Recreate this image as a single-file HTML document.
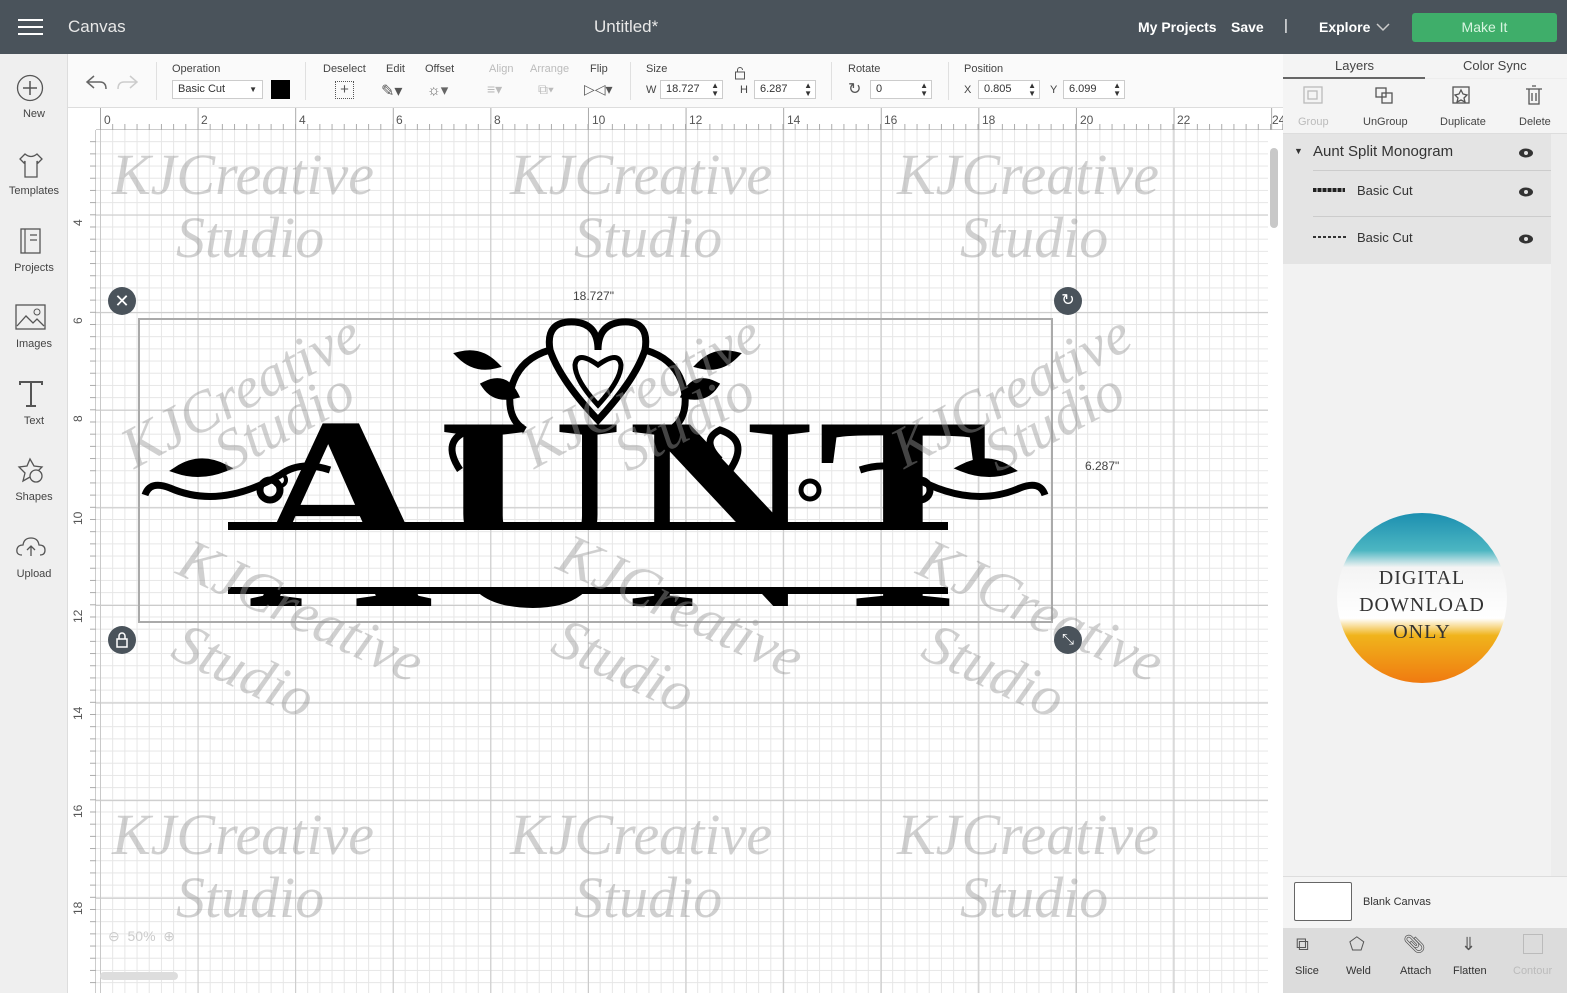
<!DOCTYPE html>
<html><head><meta charset="utf-8"><style>
*{box-sizing:border-box;margin:0;padding:0}
body{width:1588px;height:993px;overflow:hidden;background:#fff;font-family:"Liberation Sans",sans-serif;position:relative;color:#333}
.abs{position:absolute}
#top{left:0;top:0;width:1567px;height:54px;background:#4a535b;color:#fff}
#side{left:0;top:54px;width:68px;height:939px;background:#efefef;border-right:1px solid #ddd}
.si{position:absolute;left:0;width:68px;text-align:center;font-size:11px;color:#444}
#tool{left:68px;top:54px;width:1215px;height:54px;background:#fafafa;border-bottom:1px solid #ddd}
.lab{position:absolute;font-size:11px;color:#444}
.dim{color:#bbb}
.inp{position:absolute;height:19px;border:1px solid #ccc;background:#fff;font-size:11px;padding:2px 5px}
#canvas{left:96px;top:130px;width:1172px;height:863px;background-color:#fff;
background-image:
linear-gradient(to right,#c9c9c9 1px,transparent 1px),
linear-gradient(to bottom,#c9c9c9 1px,transparent 1px),
linear-gradient(to right,#e6e6e6 1px,transparent 1px),
linear-gradient(to bottom,#e6e6e6 1px,transparent 1px);
background-size:97.6px 97.6px,97.6px 97.6px,12.2px 12.2px,12.2px 12.2px;
background-position:4px 0,0 -13px,4px 0,0 -1px}
#hr{left:96px;top:108px;width:1187px;height:22px;background:#fff;border-bottom:1px solid #ccc}
#vr{left:68px;top:130px;width:28px;height:863px;background:#fff;border-right:1px solid #ccc}
#panel{left:1283px;top:54px;width:284px;height:939px;background:#ededed}
.wm{position:absolute;font-family:"Liberation Serif",serif;font-style:italic;color:rgba(150,150,150,.45);font-size:58px;line-height:62px;white-space:nowrap}
.big{font-family:"Liberation Serif",serif;font-weight:bold;color:#000;font-size:210px;line-height:1;white-space:nowrap;position:absolute}
</style></head><body>

<div id="top" class="abs">
 <div class="abs" style="left:18px;top:19px;width:25px;height:2px;background:#fff;box-shadow:0 7px 0 #fff,0 14px 0 #fff"></div>
 <div class="abs" style="left:68px;top:17px;font-size:17px;color:#e8e8e8">Canvas</div>
 <div class="abs" style="left:594px;top:17px;font-size:17px;color:#e8e8e8">Untitled*</div>
 <div class="abs" style="left:1138px;top:19px;font-size:14px;font-weight:bold">My Projects</div>
 <div class="abs" style="left:1231px;top:19px;font-size:14px;font-weight:bold">Save</div>
 <div class="abs" style="left:1284px;top:17px;font-size:15px">|</div>
 <div class="abs" style="left:1319px;top:19px;font-size:14px;font-weight:bold">Explore</div>
 <svg class="abs" style="left:1375px;top:22px" width="16" height="10"><path d="M2 2 L8 8 L14 2" stroke="#ccc" fill="none" stroke-width="1.5"/></svg>
 <div class="abs" style="left:1412px;top:13px;width:145px;height:29px;background:#3fae6a;border-radius:3px;text-align:center;line-height:29px;font-size:14px;color:#d8f5e0">Make It</div>
</div>

<div id="side" class="abs">
 <svg class="abs" style="left:16px;top:20px" width="30" height="30"><circle cx="14" cy="14" r="12.5" stroke="#555" fill="none" stroke-width="1.3"/><path d="M14 7v14M7 14h14" stroke="#555" stroke-width="1.5"/></svg>
 <div class="si" style="top:54px">New</div>
 <svg class="abs" style="left:16px;top:96px" width="30" height="30"><path d="M9 4 L4 9 L8 13 L9 11 V27 H21 V11 L22 13 L26 9 L21 4 Q15 9 9 4Z" stroke="#555" fill="none" stroke-width="1.3"/></svg>
 <div class="si" style="top:131px">Templates</div>
 <svg class="abs" style="left:16px;top:172px" width="30" height="30"><rect x="5" y="3" width="19" height="24" stroke="#555" fill="none" stroke-width="1.3"/><path d="M9 3v24M14 9h7M14 14h7" stroke="#555" stroke-width="1.2"/></svg>
 <div class="si" style="top:208px">Projects</div>
 <svg class="abs" style="left:14px;top:248px" width="34" height="30"><rect x="2" y="3" width="29" height="24" stroke="#555" fill="none" stroke-width="1.3"/><path d="M3 24 L12 14 L19 21 L23 17 L30 24" stroke="#555" fill="none" stroke-width="1.3"/><circle cx="23" cy="10" r="3" stroke="#555" fill="none"/></svg>
 <div class="si" style="top:284px">Images</div>
 <svg class="abs" style="left:16px;top:325px" width="30" height="30"><path d="M4 6V3H26V6M15 3V27M10 27H20" stroke="#555" fill="none" stroke-width="2"/></svg>
 <div class="si" style="top:361px">Text</div>
 <svg class="abs" style="left:16px;top:402px" width="30" height="30"><path d="M14 3 L18 10 L26 11 L20 17 L22 25 L14 21 L7 25 L9 17 L3 11 L11 10Z" stroke="#555" fill="none" stroke-width="1.3"/><circle cx="20" cy="20" r="6" stroke="#555" fill="#efefef" stroke-width="1.3"/></svg>
 <div class="si" style="top:437px">Shapes</div>
 <svg class="abs" style="left:14px;top:480px" width="34" height="26"><path d="M8 21 Q2 21 3 15 Q4 11 9 11 Q10 4 17 4 Q24 4 25 11 Q31 11 31 16 Q31 21 26 21" stroke="#555" fill="none" stroke-width="1.3"/><path d="M17 22V12M13 16l4-4 4 4" stroke="#555" fill="none" stroke-width="1.3"/></svg>
 <div class="si" style="top:514px">Upload</div>
</div>

<div id="tool" class="abs">
 <svg class="abs" style="left:14px;top:16px" width="60" height="24"><path d="M12 6 L5 12 L12 18 M5 12 H18 Q24 12 24 19" stroke="#666" fill="none" stroke-width="1.5"/><path d="M48 6 L55 12 L48 18 M55 12 H42 Q36 12 36 19" stroke="#ccc" fill="none" stroke-width="1.5"/></svg>
 <div class="abs" style="left:88px;top:8px;width:1px;height:38px;background:#e0e0e0"></div>
 <div class="lab" style="left:104px;top:9px">Operation</div>
 <div class="inp" style="left:104px;top:26px;width:91px">Basic Cut<span style="position:absolute;right:5px;font-size:8px;top:4px">▼</span></div>
 <div class="abs" style="left:203px;top:26px;width:19px;height:19px;background:#000"></div>
 <div class="abs" style="left:237px;top:8px;width:1px;height:38px;background:#e0e0e0"></div>
 <div class="lab" style="left:255px;top:9px">Deselect</div>
 <div class="abs" style="left:267px;top:27px;width:19px;height:18px;border:1px dotted #555;text-align:center;font-size:15px;line-height:15px;color:#555">+</div>
 <div class="lab" style="left:318px;top:9px">Edit</div>
 <div class="lab" style="left:313px;top:27px;font-size:16px;color:#555">✎▾</div>
 <div class="lab" style="left:357px;top:9px">Offset</div>
 <div class="lab" style="left:359px;top:27px;font-size:15px;color:#666">☼▾</div>
 <div class="lab dim" style="left:421px;top:9px">Align</div>
 <div class="lab dim" style="left:419px;top:27px;font-size:14px">≡▾</div>
 <div class="lab dim" style="left:462px;top:9px">Arrange</div>
 <div class="lab dim" style="left:470px;top:27px;font-size:14px">⧉▾</div>
 <div class="lab" style="left:522px;top:9px">Flip</div>
 <div class="lab" style="left:516px;top:27px;font-size:14px;color:#555">▷◁▾</div>
 <div class="abs" style="left:562px;top:8px;width:1px;height:38px;background:#e0e0e0"></div>
 <div class="lab" style="left:578px;top:9px">Size</div>
 <div class="lab" style="left:578px;top:30px">W</div>
 <div class="inp" style="left:592px;top:26px;width:63px">18.727 <span style="position:absolute;right:3px;font-size:8px;top:1px;line-height:8px">▲<br>▼</span></div>
 <svg class="abs" style="left:666px;top:12px" width="12" height="14"><rect x="1.5" y="6" width="9" height="7" stroke="#555" fill="none"/><path d="M3.5 6V4a2.5 2.5 0 0 1 5 0" stroke="#555" fill="none"/></svg>
 <div class="lab" style="left:672px;top:30px">H</div>
 <div class="inp" style="left:686px;top:26px;width:62px">6.287 <span style="position:absolute;right:3px;font-size:8px;top:1px;line-height:8px">▲<br>▼</span></div>
 <div class="abs" style="left:763px;top:8px;width:1px;height:38px;background:#e0e0e0"></div>
 <div class="lab" style="left:780px;top:9px">Rotate</div>
 <div class="lab" style="left:780px;top:25px;font-size:16px;color:#555">↻</div>
 <div class="inp" style="left:802px;top:26px;width:62px">0<span style="position:absolute;right:3px;font-size:8px;top:1px;line-height:8px">▲<br>▼</span></div>
 <div class="abs" style="left:880px;top:8px;width:1px;height:38px;background:#e0e0e0"></div>
 <div class="lab" style="left:896px;top:9px">Position</div>
 <div class="lab" style="left:896px;top:30px">X</div>
 <div class="inp" style="left:910px;top:26px;width:62px">0.805<span style="position:absolute;right:3px;font-size:8px;top:1px;line-height:8px">▲<br>▼</span></div>
 <div class="lab" style="left:982px;top:30px">Y</div>
 <div class="inp" style="left:995px;top:26px;width:62px">6.099<span style="position:absolute;right:3px;font-size:8px;top:1px;line-height:8px">▲<br>▼</span></div>
</div>

<div id="hr" class="abs">
 <svg width="1187" height="22" style="position:absolute;left:0;top:0">
  <g font-size="12" fill="#555" font-family="Liberation Sans">
   <text x="8" y="16">0</text><text x="105" y="16">2</text><text x="203" y="16">4</text><text x="300" y="16">6</text><text x="398" y="16">8</text><text x="496" y="16">10</text><text x="593" y="16">12</text><text x="691" y="16">14</text><text x="788" y="16">16</text><text x="886" y="16">18</text><text x="984" y="16">20</text><text x="1081" y="16">22</text><text x="1176" y="16">24</text>
  </g>
 </svg>
 <div class="abs" style="left:4px;top:16px;width:1183px;height:6px;background-image:linear-gradient(to right,#aaa 1px,transparent 1px);background-size:12.2px 6px"></div>
 <div class="abs" style="left:4px;top:0;width:1183px;height:22px;background-image:linear-gradient(to right,#aaa 1px,transparent 1px);background-size:97.6px 22px"></div>
</div>
<div id="vr" class="abs">
 <div class="abs" style="left:22px;top:0;width:6px;height:863px;background-image:linear-gradient(to bottom,#aaa 1px,transparent 1px);background-size:6px 12.2px;background-position:0 -1px"></div>
 <svg width="28" height="863" style="position:absolute;left:0;top:0" font-size="12" fill="#555" font-family="Liberation Sans">
  <text transform="translate(14,96) rotate(-90)">4</text>
  <text transform="translate(14,194) rotate(-90)">6</text>
  <text transform="translate(14,292) rotate(-90)">8</text>
  <text transform="translate(14,395) rotate(-90)">10</text>
  <text transform="translate(14,493) rotate(-90)">12</text>
  <text transform="translate(14,590) rotate(-90)">14</text>
  <text transform="translate(14,688) rotate(-90)">16</text>
  <text transform="translate(14,785) rotate(-90)">18</text>
 </svg>
</div>

<div id="canvas" class="abs"></div>
<div class="abs" style="left:1270px;top:148px;width:8px;height:80px;background:#c8c8c8;border-radius:4px"></div>
<div class="abs" style="left:100px;top:972px;width:78px;height:8px;background:#ddd;border-radius:4px"></div>
<div class="abs" style="left:108px;top:928px;font-size:14px;color:#ccc">⊖ &nbsp;50% &nbsp;⊕</div>

<div class="wm" style="left:112px;top:144px">KJCreative</div><div class="wm" style="left:176px;top:207px">Studio</div>
<div class="wm" style="left:510px;top:144px">KJCreative</div><div class="wm" style="left:574px;top:207px">Studio</div>
<div class="wm" style="left:897px;top:144px">KJCreative</div><div class="wm" style="left:960px;top:207px">Studio</div>
<div class="wm" style="left:112px;top:804px">KJCreative</div><div class="wm" style="left:176px;top:867px">Studio</div>
<div class="wm" style="left:510px;top:804px">KJCreative</div><div class="wm" style="left:574px;top:867px">Studio</div>
<div class="wm" style="left:897px;top:804px">KJCreative</div><div class="wm" style="left:960px;top:867px">Studio</div>

<div class="abs" style="left:138px;top:318px;width:915px;height:305px;border:2px solid #aaa"></div>
<div class="abs" style="left:573px;top:289px;font-size:12px;color:#444">18.727"</div>
<div class="abs" style="left:1085px;top:459px;font-size:12px;color:#444">6.287"</div>

<div class="abs" style="left:0;top:415px;width:1100px;height:108px;overflow:hidden">
 <div class="big" style="left:248px;top:-28px;transform:scaleX(1.22);transform-origin:0 0;letter-spacing:4px">AUNT</div>
</div>
<div class="abs" style="left:228px;top:522px;width:720px;height:8px;background:#000"></div>
<div class="abs" style="left:228px;top:587px;width:720px;height:7px;background:#000"></div>
<div class="abs" style="left:0;top:594px;width:1100px;height:28px;overflow:hidden">
 <div class="big" style="left:248px;top:-163px;transform:scaleX(1.22);transform-origin:0 0;letter-spacing:4px">AUNT</div>
</div>
<svg class="abs" style="left:130px;top:310px" width="930" height="220" fill="none" stroke="#000" stroke-width="7">
 <path d="M468 110 Q430 70 420 40 Q415 10 445 12 Q468 14 468 40 Q468 14 492 12 Q520 10 515 40 Q505 70 468 110Z"/>
 <path d="M468 95 Q445 70 445 55 Q447 40 468 55 Q489 40 491 55 Q491 70 468 95Z" stroke-width="5"/>
 <path d="M420 40 Q385 50 380 85 Q378 110 395 120"/>
 <path d="M515 40 Q550 50 555 85 Q557 110 540 120"/>
 <path d="M15 185 Q20 170 40 178 Q90 200 150 165 Q170 150 200 160"/>
 <path d="M915 185 Q910 170 890 178 Q840 200 780 165 Q760 150 730 160"/>
 <circle cx="140" cy="180" r="10"/><circle cx="790" cy="180" r="10"/>
 <circle cx="150" cy="170" r="6" stroke-width="4"/><circle cx="680" cy="180" r="9" stroke-width="5"/>
 <path d="M330 160 Q310 130 340 120 Q360 130 340 150"/>
 <path d="M600 160 Q620 130 590 120 Q570 130 590 150"/>
 <path d="M47 160 Q70 145 95 158 Q70 168 47 160Z" fill="#000"/>
 <path d="M880 160 Q857 145 832 158 Q857 168 880 160Z" fill="#000"/>
 <path d="M330 45 Q350 40 365 55 Q345 60 330 45Z" fill="#000"/>
 <path d="M605 45 Q585 40 570 55 Q590 60 605 45Z" fill="#000"/>
 <path d="M355 75 Q375 65 385 85 Q365 90 355 75Z" fill="#000"/>
 <path d="M585 75 Q565 65 555 85 Q575 90 585 75Z" fill="#000"/>
</svg>

<div class="wm" style="left:110px;top:360px;transform:rotate(-28deg)">KJCreative</div>
<div class="wm" style="left:210px;top:390px;transform:rotate(-28deg)">Studio</div>
<div class="wm" style="left:510px;top:360px;transform:rotate(-28deg)">KJCreative</div>
<div class="wm" style="left:610px;top:390px;transform:rotate(-28deg)">Studio</div>
<div class="wm" style="left:880px;top:360px;transform:rotate(-28deg)">KJCreative</div>
<div class="wm" style="left:980px;top:390px;transform:rotate(-28deg)">Studio</div>
<div class="wm" style="left:170px;top:580px;transform:rotate(25deg)">KJCreative</div>
<div class="wm" style="left:170px;top:640px;transform:rotate(25deg)">Studio</div>
<div class="wm" style="left:550px;top:575px;transform:rotate(25deg)">KJCreative</div>
<div class="wm" style="left:550px;top:635px;transform:rotate(25deg)">Studio</div>
<div class="wm" style="left:910px;top:580px;transform:rotate(25deg)">KJCreative</div>
<div class="wm" style="left:920px;top:640px;transform:rotate(25deg)">Studio</div>

<div class="abs" style="left:108px;top:287px;width:28px;height:28px;border-radius:50%;background:#4a535b;color:#fff;text-align:center;line-height:28px;font-size:18px">✕</div>
<div class="abs" style="left:1054px;top:287px;width:28px;height:28px;border-radius:50%;background:#4a535b;color:#fff;text-align:center;line-height:28px;font-size:16px">↻</div>
<div class="abs" style="left:108px;top:626px;width:28px;height:28px;border-radius:50%;background:#4a535b"><svg width="28" height="28"><rect x="9" y="13" width="10" height="8" stroke="#fff" fill="none" stroke-width="1.5"/><path d="M11 13v-3a3 3 0 0 1 6 0v3" stroke="#fff" fill="none" stroke-width="1.5"/></svg></div>
<div class="abs" style="left:1054px;top:626px;width:28px;height:28px;border-radius:50%;background:#4a535b;color:#fff;text-align:center;line-height:28px;font-size:15px">⤡</div>

<div id="panel" class="abs">
 <div class="abs" style="left:0;top:0;width:284px;height:24px;background:#f4f4f4"></div>
 <div class="abs" style="left:52px;top:4px;font-size:13px;color:#444">Layers</div>
 <div class="abs" style="left:180px;top:4px;font-size:13px;color:#444">Color Sync</div>
 <div class="abs" style="left:0;top:23px;width:142px;height:2px;background:#666"></div>
 <div class="abs" style="left:0;top:25px;width:284px;height:55px;background:#f4f4f4;border-bottom:1px solid #ddd"></div>
 <svg class="abs" style="left:18px;top:30px" width="250" height="24" fill="none" stroke-width="1.3">
  <rect x="3" y="3" width="18" height="16" stroke="#bbb"/><rect x="7" y="7" width="9" height="8" stroke="#bbb"/>
  <rect x="75" y="4" width="10" height="9" stroke="#555"/><rect x="81" y="9" width="10" height="10" stroke="#555"/>
  <rect x="152" y="3" width="16" height="16" stroke="#555"/><path d="M160 6 l2 4 4 1-3 3 1 4-4-2-4 2 1-4-3-3 4-1z" stroke="#555"/>
  <path d="M225 5h16M228 5v15h10V5M231 2h4M231 9v8M235 9v8" stroke="#555"/>
 </svg>
 <div class="abs" style="left:15px;top:62px;font-size:11px;color:#bbb">Group</div>
 <div class="abs" style="left:80px;top:62px;font-size:11px;color:#444">UnGroup</div>
 <div class="abs" style="left:157px;top:62px;font-size:11px;color:#444">Duplicate</div>
 <div class="abs" style="left:236px;top:62px;font-size:11px;color:#444">Delete</div>
 <div class="abs" style="left:0;top:80px;width:268px;height:130px;background:#e4e4e4"></div>
 <div class="abs" style="left:11px;top:92px;font-size:9px;color:#333">▼</div>
 <div class="abs" style="left:30px;top:89px;font-size:15px;color:#333">Aunt Split Monogram</div>
 <div class="abs" style="left:30px;top:116px;width:238px;height:1px;background:#ccc"></div>
 <div class="abs" style="left:30px;top:162px;width:238px;height:1px;background:#ccc"></div>
 <div class="abs" style="left:30px;top:134px;width:32px;height:4px;background:repeating-linear-gradient(90deg,#222 0 3px,#888 3px 5px)"></div>
 <div class="abs" style="left:30px;top:182px;width:34px;height:2px;background:repeating-linear-gradient(90deg,#333 0 3px,transparent 3px 5px)"></div>
 <div class="abs" style="left:74px;top:129px;font-size:13px;color:#333">Basic Cut</div>
 <div class="abs" style="left:74px;top:176px;font-size:13px;color:#333">Basic Cut</div>
 <svg class="abs" style="left:235px;top:93px" width="16" height="110"><g fill="#333"><ellipse cx="8" cy="6" rx="7" ry="4.5"/><ellipse cx="8" cy="45" rx="7" ry="4.5"/><ellipse cx="8" cy="92" rx="7" ry="4.5"/></g><g fill="#e4e4e4"><circle cx="8" cy="6" r="2"/><circle cx="8" cy="45" r="2"/><circle cx="8" cy="92" r="2"/></g></svg>
 <div class="abs" style="left:0;top:210px;width:268px;height:612px;background:#f2f2f2"></div>
 <div class="abs" style="left:54px;top:459px;width:170px;height:170px;border-radius:50%;overflow:hidden;background:linear-gradient(180deg,#1c8fb0 0%,#4cb6c2 22%,#f4f4f4 32%,#fff 62%,#f0b41c 72%,#f07a10 100%)">
  <div style="position:absolute;top:52px;width:170px;text-align:center;font-family:'Liberation Serif',serif;font-size:20px;line-height:27px;color:#333;letter-spacing:1px">DIGITAL<br>DOWNLOAD<br>ONLY</div>
 </div>
 <div class="abs" style="left:0;top:822px;width:284px;height:52px;background:#f4f4f4;border-top:1px solid #ddd"></div>
 <div class="abs" style="left:11px;top:828px;width:58px;height:39px;border:1px solid #666;background:#fff;border-radius:2px"></div>
 <div class="abs" style="left:80px;top:842px;font-size:11px;color:#333">Blank Canvas</div>
 <div class="abs" style="left:0;top:874px;width:284px;height:65px;background:#dcdcdc"></div>
 <div class="abs" style="left:13px;top:880px;font-size:18px;color:#555">⧉</div>
 <div class="abs" style="left:66px;top:880px;font-size:18px;color:#555">⬠</div>
 <div class="abs" style="left:120px;top:880px;font-size:18px;color:#555">📎︎</div>
 <div class="abs" style="left:178px;top:880px;font-size:18px;color:#555">⇓</div>
 <div class="abs" style="left:240px;top:880px;width:20px;height:20px;border:1px solid #bbb"></div>
 <div class="abs" style="left:12px;top:911px;font-size:11px;color:#333">Slice</div>
 <div class="abs" style="left:63px;top:911px;font-size:11px;color:#333">Weld</div>
 <div class="abs" style="left:117px;top:911px;font-size:11px;color:#333">Attach</div>
 <div class="abs" style="left:170px;top:911px;font-size:11px;color:#333">Flatten</div>
 <div class="abs" style="left:230px;top:911px;font-size:11px;color:#bbb">Contour</div>
</div>
</body></html>
